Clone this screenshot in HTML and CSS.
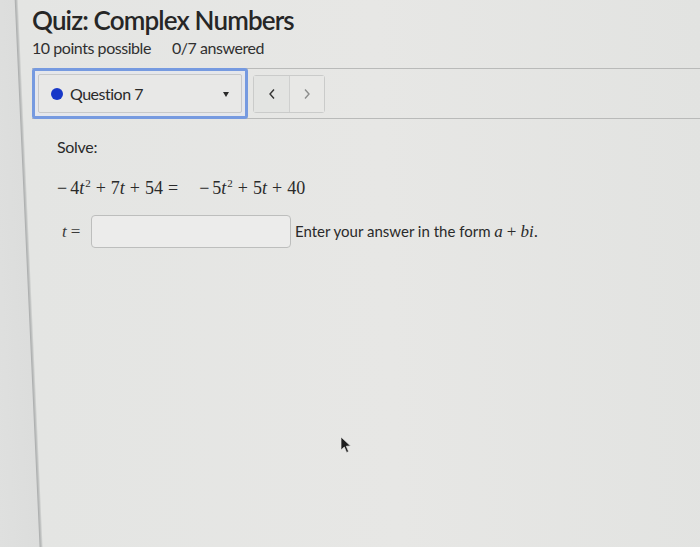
FILE: index.html
```html
<!DOCTYPE html>
<html>
<head>
<meta charset="utf-8">
<link rel="stylesheet" href="styles.css">
</head>
<body>
<div class="page">
  <header class="head">
    <h1 class="title">Quiz: Complex Numbers</h1>
    <div class="meta"><span>10 points possible</span><span>0/7 answered</span></div>
  </header>
  <div class="navrow">
    <div class="select">
      <div class="select-inner">
        <span class="dot"></span>
        <span class="qlabel">Question 7</span>
        <span class="caret"></span>
      </div>
    </div>
    <div class="pager">
      <button class="pbtn"><svg width="8" height="12" viewBox="0 0 8 12"><path d="M6 1.5 L2 6 L6 10.5" fill="none" stroke="#333" stroke-width="1.4"/></svg></button>
      <button class="pbtn pbtn-next"><svg width="8" height="12" viewBox="0 0 8 12"><path d="M2 1.5 L6 6 L2 10.5" fill="none" stroke="#8c8d8c" stroke-width="1.4"/></svg></button>
    </div>
  </div>
  <main class="question">
    <p class="solve">Solve:</p>
    <p class="eq"><span class="neg">&minus;</span>4<i>t</i><sup>2</sup><span class="op">+</span>7<i>t</i><span class="op">+</span>54<span class="op eqs">=</span><span class="neg neg2">&minus;</span>5<i>t</i><sup>2</sup><span class="op">+</span>5<i>t</i><span class="op">+</span>40</p>
    <div class="answer">
      <span class="var"><i>t</i><span class="veq">=</span></span>
      <span class="input"></span>
      <span class="hint">Enter your answer in the form <span class="m"><i>a</i><span class="op sm">+</span><i>bi</i>.</span></span>
    </div>
  </main>
</div>
<svg class="cursor" width="14" height="20" viewBox="0 0 14 20"><path d="M1 1 L1 14 L4.3 11 L6.6 16.5 L8.6 15.6 L6.3 10.2 L10.6 10 Z" fill="#1e1e1e" stroke="#e8e8e6" stroke-width="0.7"/></svg>
</body>
</html>
```
FILE: styles.css
```css
html, body {
  margin: 0;
  padding: 0;
}
body {
  width: 700px;
  height: 547px;
  overflow: hidden;
  position: relative;
  font-family: "Lato", "Open Sans", sans-serif;
  color: #262626;
  background: linear-gradient(87.4deg, #dfe0df 0, #dcdddc 39px, #aeb0b0 40px, #c3c5c4 41.5px, #e4e5e3 43px, #e7e7e5 55%, #e2e3e1 100%);
}
.page {
  padding: 0 0 0 32px;
}
.head {
  padding-top: 4px;
}
.title {
  margin: 0;
  font-size: 26px;
  font-weight: 600;
  line-height: 32px;
  color: #262626;
  letter-spacing: -0.85px;
}
.meta {
  display: flex;
  gap: 21px;
  font-size: 16px;
  line-height: 20px;
  margin-top: 2px;
  color: #303030;
  letter-spacing: -0.45px;
}
.navrow {
  margin-top: 10px;
  display: flex;
  align-items: center;
  gap: 5px;
  border-top: 1px solid #b9bab9;
  border-bottom: 1px solid #b9bab9;
  height: 49px;
}
.select {
  width: 216px;
  height: 51px;
  margin: -1px 0;
  border: 3px solid #769ae0;
  border-radius: 3px;
  box-sizing: border-box;
  padding: 3px;
  background: #e5e7ec;
}
.select-inner {
  height: 100%;
  box-sizing: border-box;
  border: 1px solid #c8c9ca;
  border-radius: 2px;
  background: #e8e8e7;
  display: flex;
  align-items: center;
  padding-left: 12px;
  padding-right: 12px;
}
.dot {
  width: 12px;
  height: 12px;
  border-radius: 50%;
  background: #1737c8;
  margin-right: 7px;
}
.qlabel {
  font-size: 16px;
  color: #2a2a2a;
  flex: 1;
  letter-spacing: -0.5px;
}
.caret {
  width: 0;
  height: 0;
  border-left: 3.5px solid transparent;
  border-right: 3.5px solid transparent;
  border-top: 5px solid #2a2a2a;
  margin-top: 2px;
}
.pager {
  display: flex;
  height: 38px;
  border: 1px solid #cacbca;
  border-radius: 3px;
  box-sizing: border-box;
}
.pbtn {
  width: 35px;
  height: 100%;
  border: 0;
  background: #e3e4e2;
  padding: 0;
  display: flex;
  align-items: center;
  justify-content: center;
}
.pbtn-next {
  border-left: 1px solid #cfd0cf;
  background: #e8e8e6;
}
.question {
  padding-left: 25px;
  padding-top: 18px;
}
.solve {
  margin: 0;
  font-size: 16px;
  line-height: 20px;
  color: #2a2a2a;
  letter-spacing: -0.3px;
}
.eq {
  margin: 21px 0 0;
  font-family: "Liberation Serif", "DejaVu Serif", serif;
  font-size: 18px;
  line-height: 20px;
  color: #2a2a2a;
}
.eq sup {
  font-size: 11px;
  line-height: 0;
  margin-left: 1px;
}
.op {
  margin: 0 5px;
}
.eqs {
  margin: 0 4px 0 5px;
}
.neg {
  margin-right: 3px;
}
.neg2 {
  margin-left: 17px;
}
.answer {
  margin-top: 17px;
  display: flex;
  align-items: center;
}
.var {
  font-family: "Liberation Serif", serif;
  font-size: 17px;
  width: 34px;
  padding-left: 5px;
  box-sizing: border-box;
  color: #3a3a3a;
}
.veq {
  margin-left: 4px;
}
.input {
  width: 200px;
  height: 33px;
  box-sizing: border-box;
  border: 1px solid #bdbebd;
  border-radius: 4px;
  background: #ececeb;
  margin-right: 4px;
}
.hint {
  font-size: 15px;
  color: #2a2a2a;
}
.m {
  font-family: "Liberation Serif", serif;
  font-size: 17px;
}
.sm {
  margin: 0 4px;
}
.cursor {
  position: absolute;
  left: 340px;
  top: 436px;
}
```
